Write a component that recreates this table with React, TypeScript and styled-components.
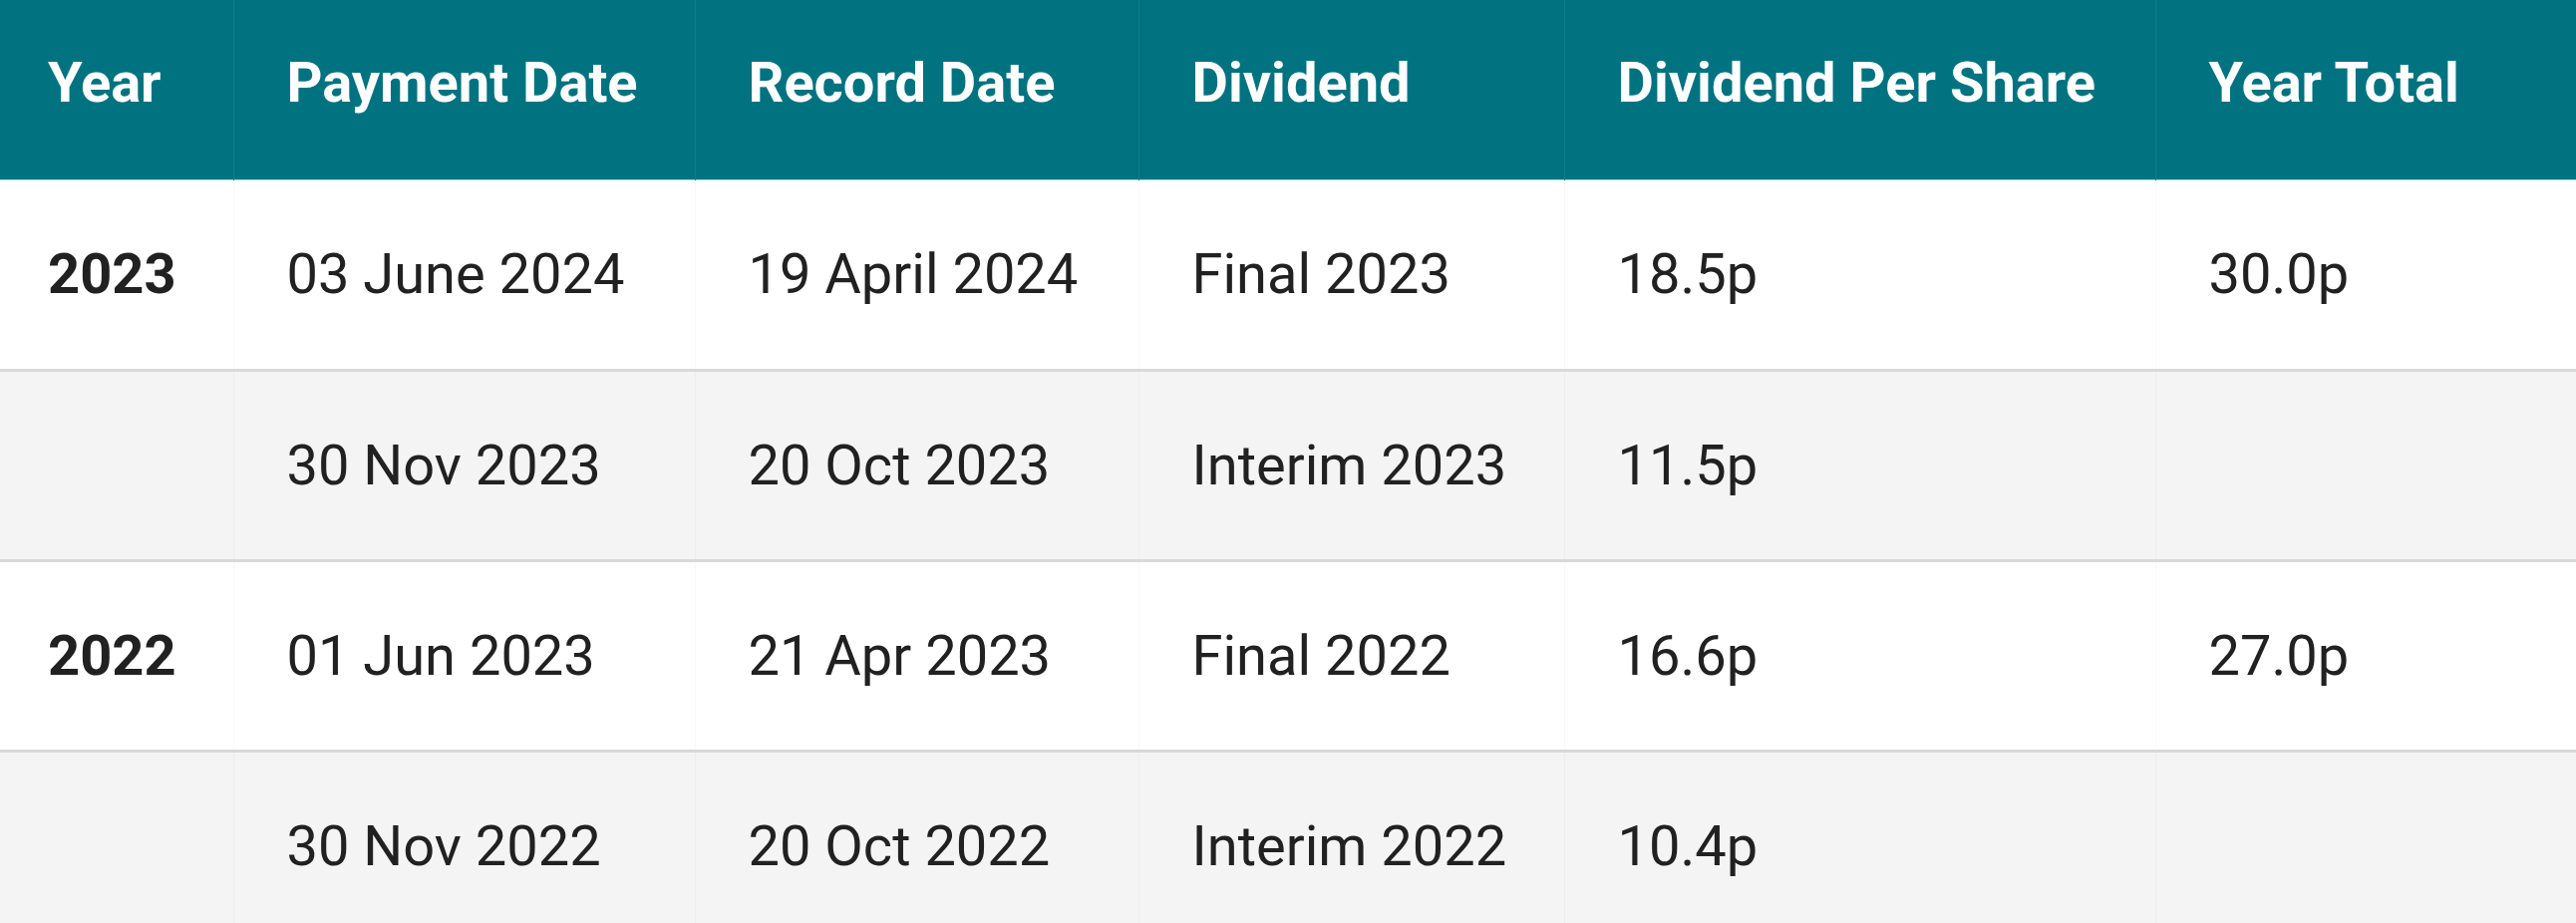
import React from "react";
import styled, { createGlobalStyle } from "styled-components";

const GlobalStyle = createGlobalStyle`
  html, body { margin: 0; padding: 0; background: #ffffff; }
  body { font-family: Roboto, "Liberation Sans", Arial, sans-serif; overflow: hidden; }
`;

const Table = styled.table`
  width: 2584px;
  border-collapse: collapse;
  table-layout: fixed;
  font-family: Roboto, "Liberation Sans", Arial, sans-serif;
`;

const HeadRow = styled.tr`
  background: #017380;
  border-bottom: 1px solid #9fdde3;
`;

const HeadCell = styled.th<{ $first?: boolean }>`
  height: 180px;
  box-sizing: border-box;
  padding: 55px 0 0 ${(p) => (p.$first ? 48 : 53)}px;
  vertical-align: top;
  text-align: left;
  color: #ffffff;
  font-size: 56px;
  line-height: 56px;
  font-weight: 700;
  white-space: nowrap;
  border-left: ${(p) => (p.$first ? "none" : "1px solid #0f7d89")};
`;

const BodyRow = styled.tr<{ $shaded?: boolean }>`
  background: ${(p) => (p.$shaded ? "#f4f4f4" : "#ffffff")};
  border-bottom: 3px solid #d8d8d8;
`;

const BodyCell = styled.td<{ $first?: boolean }>`
  height: 191px;
  box-sizing: border-box;
  padding: 0 0 0 ${(p) => (p.$first ? 48 : 53)}px;
  vertical-align: middle;
  color: #212121;
  font-size: 56px;
  line-height: 64px;
  font-weight: ${(p) => (p.$first ? 700 : 400)};
  white-space: nowrap;
  border-left: ${(p) => (p.$first ? "none" : "1px solid rgba(0,0,0,0.025)")};
`;

const widths = [234, 463, 445, 427, 593, 422];
const headers = ["Year", "Payment Date", "Record Date", "Dividend", "Dividend Per Share", "Year Total"];

const rows = [
  ["2023", "03 June 2024", "19 April 2024", "Final 2023", "18.5p", "30.0p"],
  ["", "30 Nov 2023", "20 Oct 2023", "Interim 2023", "11.5p", ""],
  ["2022", "01 Jun 2023", "21 Apr 2023", "Final 2022", "16.6p", "27.0p"],
  ["", "30 Nov 2022", "20 Oct 2022", "Interim 2022", "10.4p", ""],
];

export default function App() {
  return (
    <>
      <GlobalStyle />
      <Table>
        <colgroup>
          {widths.map((w, i) => (
            <col key={i} style={{ width: w }} />
          ))}
        </colgroup>
        <thead>
          <HeadRow>
            {headers.map((h, i) => (
              <HeadCell key={h} $first={i === 0}>
                {h}
              </HeadCell>
            ))}
          </HeadRow>
        </thead>
        <tbody>
          {rows.map((r, ri) => (
            <BodyRow key={ri} $shaded={ri % 2 === 1}>
              {r.map((c, ci) => (
                <BodyCell key={ci} $first={ci === 0}>
                  {c}
                </BodyCell>
              ))}
            </BodyRow>
          ))}
        </tbody>
      </Table>
    </>
  );
}
